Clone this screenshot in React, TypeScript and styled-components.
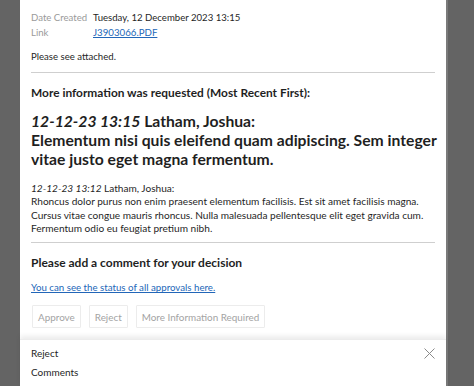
import styled, { createGlobalStyle } from "styled-components"

const GlobalStyle = createGlobalStyle`
  html, body {
    margin: 0;
    padding: 0;
    background: #646464;
  }
  body {
    font-family: Lato, "Open Sans", sans-serif;
    color: #1f1f1f;
  }
`

const Backdrop = styled.div`
  width: 474px;
  height: 386px;
  overflow: hidden;
  background: #646464;
  display: flex;
  justify-content: flex-start;
`

const Panel = styled.div`
  margin-left: 20px;
  width: 426px;
  height: 386px;
  background: #fff;
  display: flex;
  flex-direction: column;
  border-right: 2px solid #7a7a7a;
`

const Content = styled.div`
  padding: 10px 11px 0 11px;
`

const MetaGrid = styled.div`
  display: grid;
  grid-template-columns: 62px 1fr;
  font-size: 9.6px;
  line-height: 15px;
`

const MetaLabel = styled.span`
  color: #9a9a9a;
`

const MetaValue = styled.span`
  color: #1f1f1f;
`

const Link = styled.a`
  color: #2266b8;
  text-decoration: underline;
  font-size: 9.7px;
`

const Paragraph = styled.p<{ $top: number }>`
  margin: ${({ $top }) => $top}px 0 0;
  font-size: 9.6px;
  line-height: 14px;
`

const Divider = styled.hr<{ $top: number }>`
  border: none;
  border-top: 1px solid #cfcfcf;
  margin: ${({ $top }) => $top}px 0 0;
`

const SectionTitle = styled.h3<{ $size: number; $top: number }>`
  margin: ${({ $top }) => $top}px 0 0;
  font-size: ${({ $size }) => $size}px;
  font-weight: 700;
  line-height: 16px;
`

const Latest = styled.div`
  margin-top: 11px;
  font-size: 15.7px;
  line-height: 19px;
  font-weight: 700;
`

const Earlier = styled.div`
  margin-top: 13px;
  font-size: 10.1px;
  line-height: 13.3px;
`

const Line = styled.span`
  display: block;
  white-space: nowrap;
`

const Stamp = styled.em`
  font-style: italic;
`

const Actions = styled.div`
  display: flex;
  gap: 8px;
  margin-top: 10px;
  padding-left: 1px;
`

const ActionButton = styled.button`
  font-family: inherit;
  font-size: 9.9px;
  color: #a3a3a3;
  background: #fff;
  border: 1px solid #ececec;
  border-radius: 1px;
  height: 23px;
  padding: 0 5px;
`

const Sheet = styled.div`
  margin-top: 11px;
  flex: 1;
  box-shadow: 0 -3px 5px rgba(0, 0, 0, 0.08);
  border-top: 1px solid #ececec;
  padding: 5px 11px 0;
  display: flex;
  flex-direction: column;
`

const SheetHeader = styled.div`
  display: flex;
  justify-content: space-between;
  align-items: center;
  font-size: 10px;
  line-height: 16px;
`

const SheetLabel = styled.div`
  margin-top: 3px;
  font-size: 10px;
  line-height: 16px;
`

const Close = styled.svg`
  width: 11px;
  height: 11px;
`

export default function App() {
  return (
    <Backdrop>
      <GlobalStyle />
      <Panel>
        <Content>
          <MetaGrid>
            <MetaLabel>Date Created</MetaLabel>
            <MetaValue>Tuesday, 12 December 2023 13:15</MetaValue>
            <MetaLabel>Link</MetaLabel>
            <span>
              <Link href="#">J3903066.PDF</Link>
            </span>
          </MetaGrid>
          <Paragraph $top={10}>Please see attached.</Paragraph>
          <Divider $top={8} />
          <SectionTitle $size={11.9} $top={12}>
            More information was requested (Most Recent First):
          </SectionTitle>
          <Latest>
            <Line>
              <Stamp>12-12-23 13:15</Stamp> Latham, Joshua:
            </Line>
            <Line>Elementum nisi quis eleifend quam adipiscing. Sem integer</Line>
            <Line>vitae justo eget magna fermentum.</Line>
          </Latest>
          <Earlier>
            <Line>
              <Stamp>12-12-23 13:12</Stamp> Latham, Joshua:
            </Line>
            <Line>
              Rhoncus dolor purus non enim praesent elementum facilisis. Est sit
              amet facilisis magna.
            </Line>
            <Line>
              Cursus vitae congue mauris rhoncus. Nulla malesuada pellentesque
              elit eget gravida cum.
            </Line>
            <Line>Fermentum odio eu feugiat pretium nibh.</Line>
          </Earlier>
          <Divider $top={7} />
          <SectionTitle $size={12} $top={12}>
            Please add a comment for your decision
          </SectionTitle>
          <Paragraph $top={9}>
            <Link href="#">You can see the status of all approvals here.</Link>
          </Paragraph>
          <Actions>
            <ActionButton disabled>Approve</ActionButton>
            <ActionButton disabled>Reject</ActionButton>
            <ActionButton disabled>More Information Required</ActionButton>
          </Actions>
        </Content>
        <Sheet>
          <SheetHeader>
            <span>Reject</span>
            <Close viewBox="0 0 11 11">
              <path d="M0.5 0.5 L10.5 10.5 M10.5 0.5 L0.5 10.5" stroke="#8a8a8a" strokeWidth="1" />
            </Close>
          </SheetHeader>
          <SheetLabel>Comments</SheetLabel>
        </Sheet>
      </Panel>
    </Backdrop>
  )
}
